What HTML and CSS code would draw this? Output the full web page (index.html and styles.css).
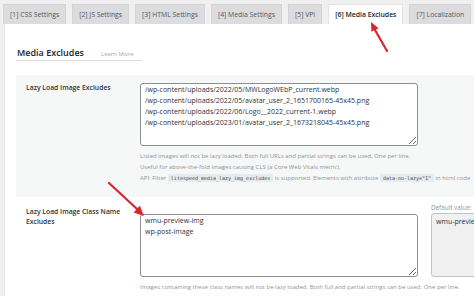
FILE: index.html
```html
<!DOCTYPE html>
<html lang="en">
<head>
<meta charset="utf-8">
<title>Media Excludes</title>
<link rel="stylesheet" href="styles.css">
</head>
<body>
<div class="page">
  <nav class="tabs">
    <a class="tab">[1] CSS Settings</a>
    <a class="tab">[2] JS Settings</a>
    <a class="tab">[3] HTML Settings</a>
    <a class="tab">[4] Media Settings</a>
    <a class="tab">[5] VPI</a>
    <a class="tab active">[6] Media Excludes</a>
    <a class="tab">[7] Localization</a>
  </nav>
  <div class="panel">
    <div class="heading">
      <h3 class="title">Media Excludes</h3>
      <span class="learn">Learn More</span>
    </div>
    <div class="row row-alt">
      <div class="label">Lazy Load Image Excludes</div>
      <div class="field">
        <textarea class="ta ta-main" readonly>/wp-content/uploads/2022/05/MWLogoWEbP_current.webp
/wp-content/uploads/2022/05/avatar_user_2_1651700165-45x45.png
/wp-content/uploads/2022/06/Logo__2022_current-1.webp
/wp-content/uploads/2023/01/avatar_user_2_1673218045-45x45.png</textarea>
        <div class="help">
          <p>Listed images will not be lazy loaded. Both full URLs and partial strings can be used. One per line.</p>
          <p>Useful for above-the-fold images causing CLS (a Core Web Vitals metric).</p>
          <p>API: Filter <code>litespeed_media_lazy_img_excludes</code> is supported. Elements with attribute <code>data-no-lazy="1"</code> in html code</p>
        </div>
      </div>
    </div>
    <div class="row row-second">
      <div class="label label-second">Lazy Load Image Class Name Excludes</div>
      <div class="field">
        <div class="field-pair">
          <textarea class="ta ta-second" readonly>wmu-preview-img
wp-post-image</textarea>
          <div class="default">
            <div class="default-label">Default value:</div>
            <div class="default-box">wmu-preview-img</div>
          </div>
        </div>
        <div class="help">
          <p>Images containing these class names will not be lazy loaded. Both full and partial strings can be used. One per line.</p>
        </div>
      </div>
    </div>
  </div>
  <svg class="arrows" width="474" height="296" viewBox="0 0 474 296" aria-hidden="true">
    <line x1="387" y1="51" x2="375" y2="30" stroke="#d7262c" stroke-width="2.2" stroke-linecap="round"/>
    <polygon points="371,22 378.6,28.2 371.4,31.8" fill="#d7262c"/>
    <line x1="109" y1="183" x2="137" y2="209" stroke="#d7262c" stroke-width="2.2" stroke-linecap="round"/>
    <polygon points="144,216 133.6,212.4 139.8,205.8" fill="#d7262c"/>
  </svg>
</div>
</body>
</html>
```

FILE: styles.css
```css
html, body {
  margin: 0;
  padding: 0;
  overflow: hidden;
}

body {
  background: #f0f0f1;
  font-family: "Open Sans", "Noto Sans", sans-serif;
  color: #1d2327;
}

.page {
  position: relative;
  width: 474px;
  height: 296px;
  overflow: hidden;
}

.tabs {
  display: flex;
  gap: 6px;
  padding: 4px 0 0 3px;
  height: 20px;
  white-space: nowrap;
}

.tab {
  display: flex;
  align-items: center;
  padding: 0 6px;
  background: #dcdcde;
  color: #50575e;
  font-size: 6.85px;
  border: 1px solid #d3d4d6;
  border-bottom: none;
}

.tab.active {
  background: #fff;
  color: #1d2327;
  font-weight: 600;
  border-color: #e2e3e4;
}

.panel {
  background: #fff;
  margin-left: 4px;
  border-left: 1px solid #e6e6e7;
  padding: 22px 0 0 11px;
  height: 272px;
  box-sizing: border-box;
}

.heading {
  display: flex;
  align-items: baseline;
  width: 126px;
  border-bottom: 1px solid #dcdcde;
}

.title {
  margin: 0 0 0 1px;
  font-size: 9px;
  line-height: 14px;
  font-weight: 600;
  color: #1d2327;
}

.learn {
  margin-left: 17px;
  font-size: 6px;
  color: #a7aaad;
}

.row {
  display: flex;
  padding-left: 10px;
}

.row-alt {
  margin-top: 14px;
  background: #f6f7f7;
  padding-top: 8px;
  padding-bottom: 13px;
}

.row-second {
  padding-top: 6px;
}

.label {
  width: 114px;
  flex: none;
  font-size: 6.8px;
  line-height: 10px;
  font-weight: 600;
  color: #2c3338;
}

.label-second {
  width: 104px;
  margin-right: 10px;
  margin-top: 3.5px;
}

.field {
  flex: 1;
  min-width: 0;
}

.ta {
  display: block;
  flex: none;
  box-sizing: border-box;
  width: 278px;
  height: 63px;
  margin: 0;
  padding: 0 4px;
  border: 1px solid #8c8f94;
  border-radius: 3px;
  background: #fff;
  color: #2c3338;
  font-family: "Open Sans", "Noto Sans", sans-serif;
  font-size: 7px;
  line-height: 11px;
  white-space: pre;
  overflow: hidden;
  resize: both;
}

.ta-second {
  margin-top: 11px;
}

.help {
  margin-top: 5px;
  font-size: 6px;
  line-height: 11px;
  color: #8f959a;
  white-space: nowrap;
}

.row-second .help {
  margin-top: 4.5px;
}

.help p {
  margin: 0;
}

.help code {
  font-family: "DejaVu Sans Mono", "Liberation Mono", monospace;
  font-size: 5px;
  background: #e6ebf0;
  color: #3c434a;
  padding: 1px 3px;
}

.field-pair {
  display: flex;
}

.default {
  margin-left: 13px;
  flex: none;
}

.default-label {
  font-size: 6.3px;
  line-height: 10px;
  color: #8f959a;
}

.default-box {
  box-sizing: border-box;
  width: 80px;
  height: 64px;
  padding: 2px 4px;
  border: 1px solid #c3c4c7;
  border-radius: 3px;
  background: #f0f0f1;
  color: #2c3338;
  font-size: 7px;
  line-height: 11px;
  white-space: nowrap;
}

.arrows {
  position: absolute;
  left: 0;
  top: 0;
  pointer-events: none;
}
```
